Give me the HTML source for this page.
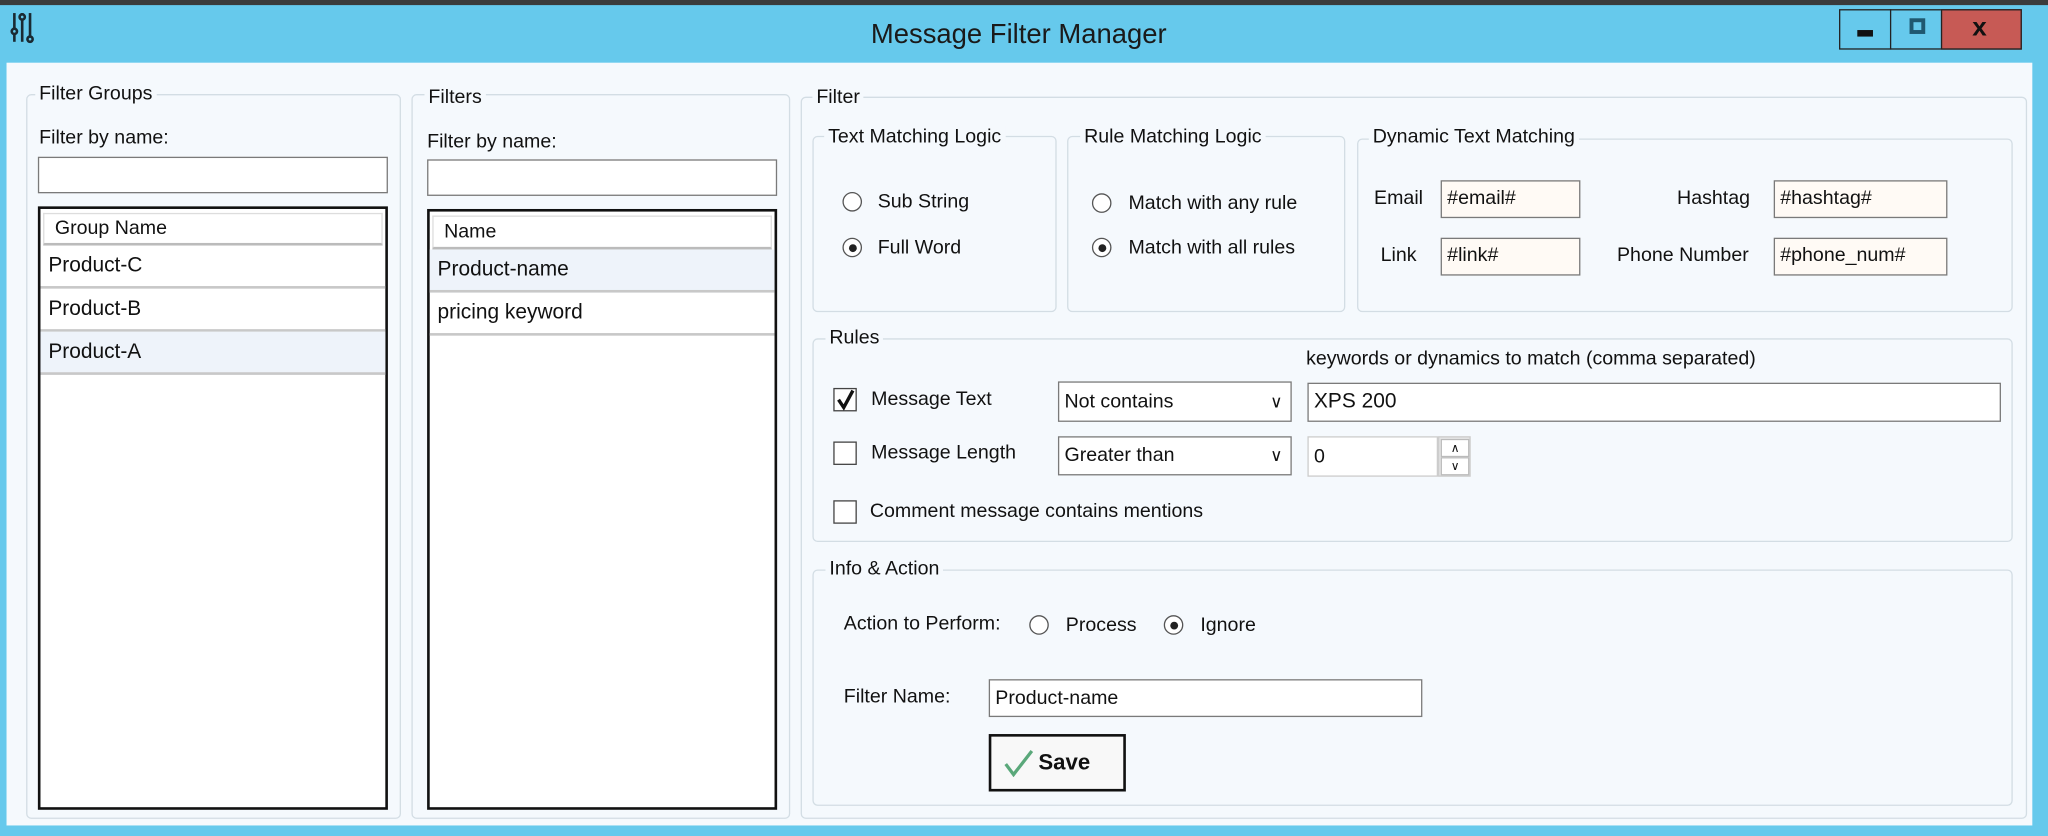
<!DOCTYPE html>
<html><head><meta charset="utf-8"><style>
html,body{margin:0;padding:0;width:2048px;height:835px;overflow:hidden;background:#66c9ec;}
#s{position:absolute;left:0;top:0;width:1568px;height:640px;transform:scale(1.30612);transform-origin:0 0;font-family:"Liberation Sans",sans-serif;font-size:15px;color:#111;}
.a{position:absolute;}
.t{position:absolute;white-space:nowrap;line-height:18px;}
.gb{position:absolute;border:1px solid #d3dde4;border-radius:4px;}
.gl{position:absolute;background:#f5f9fd;padding:0 3px;white-space:nowrap;line-height:18px;}
.in{position:absolute;background:#fff;border:1px solid #7a7a7a;box-sizing:border-box;padding-left:4px;line-height:26px;white-space:nowrap;}
.row{position:absolute;left:0;right:0;border-bottom:2px solid #c8c8c8;box-sizing:border-box;padding-left:6px;font-size:16px;}
.rd{position:absolute;width:15px;height:15px;border:1px solid #555;border-radius:50%;background:#fff;box-sizing:border-box;}
.rd.on::after{content:"";position:absolute;left:3.5px;top:3.5px;width:6px;height:6px;border-radius:50%;background:#222;}
.cb{position:absolute;width:18px;height:18px;border:1px solid #444;background:#fff;box-sizing:border-box;}
</style></head><body><div id="s">
<div class="a" style="left:0;top:0;width:1568px;height:4px;background:#3b3b3b"></div>
<div class="a" style="left:0;top:4px;width:1568px;height:44px;background:#66c9ec"></div>
<svg class="a" style="left:8px;top:8px" width="18" height="28" viewBox="0 0 18 28"><g stroke="#1a2a33" stroke-width="2" fill="none"><line x1="3" y1="2" x2="3" y2="24"/><line x1="9" y1="2" x2="9" y2="24"/><line x1="15" y1="2" x2="15" y2="24"/><circle cx="3" cy="16" r="2" fill="#66c9ec"/><circle cx="9" cy="5" r="2" fill="#66c9ec"/><circle cx="15" cy="22" r="2" fill="#66c9ec"/></g></svg>
<div class="t" style="left:0;width:1560px;text-align:center;top:15px;font-size:21px;line-height:24px;color:#1a1a1a">Message Filter Manager</div>
<div class="a" style="left:1408px;top:7px;width:140px;height:31px;border:1px solid #222;box-sizing:border-box;background:#66c9ec"></div>
<div class="a" style="left:1447px;top:7px;width:1px;height:31px;background:#222"></div>
<div class="a" style="left:1486px;top:7px;width:62px;height:31px;background:#c75a55;border:1px solid #222;box-sizing:border-box"></div>
<div class="a" style="left:1422px;top:23px;width:12px;height:5px;background:#111"></div>
<div class="a" style="left:1462px;top:14px;width:12px;height:12px;border:3px solid #1f5870;box-sizing:border-box"></div>
<div class="t" style="left:1510px;top:10px;font-size:20px;font-weight:bold;line-height:22px">x</div>
<div class="a" style="left:5px;top:48px;width:1551px;height:584px;background:#f5f9fd"></div>

<div class="gb" style="left:20px;top:72px;width:285px;height:553px"></div>
<div class="gl" style="left:27px;top:63px">Filter Groups</div>
<div class="t" style="left:30px;top:97px">Filter by name:</div>
<div class="in" style="left:29px;top:120px;width:268px;height:28px"></div>
<div class="a" style="left:29px;top:158px;width:268px;height:462px;background:#fff;border:2px solid #111;box-sizing:border-box">
<div class="row" style="top:3px;height:25px;border:1px solid #ddd;border-bottom:2px solid #bbb;margin:0 2px;padding-left:8px;line-height:22px;font-size:15px">Group Name</div>
<div class="row" style="top:28px;height:33px;line-height:31px">Product-C</div>
<div class="row" style="top:61px;height:33px;line-height:31px">Product-B</div>
<div class="row" style="top:94px;height:33px;line-height:31px;background:#eef3fa">Product-A</div>
</div>

<div class="gb" style="left:315px;top:72px;width:288px;height:553px"></div>
<div class="gl" style="left:325px;top:66px">Filters</div>
<div class="t" style="left:327px;top:100px">Filter by name:</div>
<div class="in" style="left:327px;top:122px;width:268px;height:28px"></div>
<div class="a" style="left:327px;top:160px;width:268px;height:460px;background:#fff;border:2px solid #111;box-sizing:border-box">
<div class="row" style="top:3px;height:26px;border:1px solid #ddd;border-bottom:2px solid #bbb;margin:0 2px;padding-left:8px;line-height:24px;font-size:15px">Name</div>
<div class="row" style="top:29px;height:33px;line-height:31px;background:#eef3fa">Product-name</div>
<div class="row" style="top:62px;height:33px;line-height:31px">pricing keyword</div>
</div>

<div class="gb" style="left:613px;top:74px;width:937px;height:551px"></div>
<div class="gl" style="left:622px;top:66px">Filter</div>

<div class="gb" style="left:622px;top:104px;width:185px;height:133px"></div>
<div class="gl" style="left:631px;top:96px">Text Matching Logic</div>
<div class="rd" style="left:645px;top:147px"></div><div class="t" style="left:672px;top:146px">Sub String</div>
<div class="rd on" style="left:645px;top:182px"></div><div class="t" style="left:672px;top:181px">Full Word</div>

<div class="gb" style="left:817px;top:104px;width:211px;height:133px"></div>
<div class="gl" style="left:827px;top:96px">Rule Matching Logic</div>
<div class="rd" style="left:836px;top:148px"></div><div class="t" style="left:864px;top:147px">Match with any rule</div>
<div class="rd on" style="left:836px;top:182px"></div><div class="t" style="left:864px;top:181px">Match with all rules</div>

<div class="gb" style="left:1039px;top:106px;width:500px;height:131px"></div>
<div class="gl" style="left:1048px;top:96px">Dynamic Text Matching</div>
<div class="t" style="left:1052px;top:143px">Email</div>
<div class="in" style="left:1103px;top:138px;width:107px;height:29px;background:#fffaf5">#email#</div>
<div class="t" style="left:1057px;top:187px">Link</div>
<div class="in" style="left:1103px;top:182px;width:107px;height:29px;background:#fffaf5">#link#</div>
<div class="t" style="left:1284px;top:143px">Hashtag</div>
<div class="in" style="left:1358px;top:138px;width:133px;height:29px;background:#fffaf5">#hashtag#</div>
<div class="t" style="left:1238px;top:187px">Phone Number</div>
<div class="in" style="left:1358px;top:182px;width:133px;height:29px;background:#fffaf5">#phone_num#</div>

<div class="gb" style="left:622px;top:259px;width:917px;height:154px"></div>
<div class="gl" style="left:632px;top:250px">Rules</div>
<div class="t" style="left:1000px;top:266px">keywords or dynamics to match (comma separated)</div>
<div class="cb" style="left:638px;top:297px"></div>
<svg class="a" style="left:640px;top:297px" width="16" height="18"><path d="M2 9 L6 15 L13 2" stroke="#111" stroke-width="2.6" fill="none"/></svg>
<div class="t" style="left:667px;top:297px">Message Text</div>
<div class="in" style="left:810px;top:292px;width:179px;height:31px;line-height:29px">Not contains<span style="position:absolute;right:6px;font-size:13px">&#x2228;</span></div>
<div class="in" style="left:1001px;top:293px;width:531px;height:30px;line-height:28px;font-size:16px">XPS 200</div>
<div class="cb" style="left:638px;top:338px"></div>
<div class="t" style="left:667px;top:338px">Message Length</div>
<div class="in" style="left:810px;top:334px;width:179px;height:30px;line-height:28px">Greater than<span style="position:absolute;right:6px;font-size:13px">&#x2228;</span></div>
<div class="in" style="left:1001px;top:334px;width:100px;height:31px;border-color:#ccc;line-height:29px">0</div>
<div class="a" style="left:1101px;top:334px;width:25px;height:31px;background:#e6e6e6;border:1px solid #ccc;box-sizing:border-box"></div>
<div class="a" style="left:1103px;top:336px;width:20px;height:12px;background:#fff;border:1px solid #bbb;font-size:9px;text-align:center;line-height:12px">&#x2227;</div>
<div class="a" style="left:1103px;top:350px;width:20px;height:12px;background:#fff;border:1px solid #bbb;font-size:9px;text-align:center;line-height:12px">&#x2228;</div>
<div class="cb" style="left:638px;top:383px"></div>
<div class="t" style="left:666px;top:383px">Comment message contains mentions</div>

<div class="gb" style="left:622px;top:436px;width:917px;height:179px"></div>
<div class="gl" style="left:632px;top:427px">Info &amp; Action</div>
<div class="t" style="left:646px;top:469px">Action to Perform:</div>
<div class="rd" style="left:788px;top:471px"></div><div class="t" style="left:816px;top:470px">Process</div>
<div class="rd on" style="left:891px;top:471px"></div><div class="t" style="left:919px;top:470px">Ignore</div>
<div class="t" style="left:646px;top:525px">Filter Name:</div>
<div class="in" style="left:757px;top:520px;width:332px;height:29px;line-height:27px">Product-name</div>
<div class="a" style="left:757px;top:562px;width:105px;height:44px;border:2.5px solid #111;box-sizing:border-box;background:#f8f8f8"></div>
<svg class="a" style="left:768px;top:573px" width="24" height="22"><path d="M2 12 L8 20 L22 2" stroke="#5aa87a" stroke-width="2.5" fill="none"/></svg>
<div class="t" style="left:795px;top:575px;font-weight:bold;font-size:17px">Save</div>
</div></body></html>
